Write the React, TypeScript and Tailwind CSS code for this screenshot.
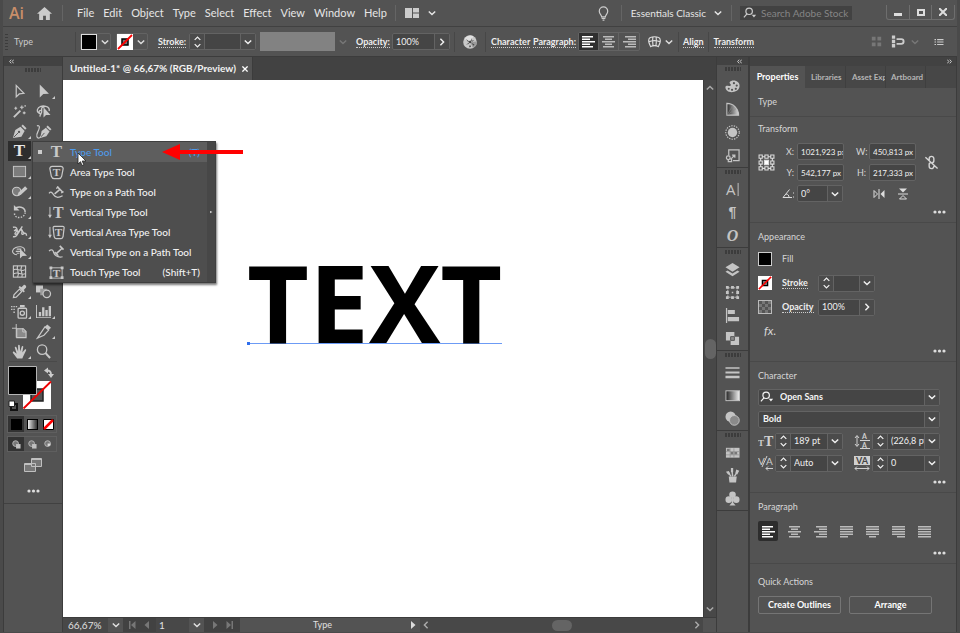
import { useState } from 'react'
import type { ReactNode } from 'react'
import clsx from 'clsx'

// All glyphs live on a 16x16 grid
const icons: Record<string, ReactNode> = {
  select: <path d="M4.5 1.5v12.2l3.2-3.1 5-.6z" fill="none" stroke="currentColor" strokeWidth="1.3" />,
  direct: <path d="M4 .5v14l3.8-3.8 6-.3z" />,
  wand: (
    <g stroke="currentColor" strokeWidth="1.2" fill="none">
      <path d="M2 14l7-7" strokeWidth="2" />
      <path d="M10.5 1.5v4M8.5 3.5h4M4 3v3M2.5 4.5h3M13 8v3M11.5 9.5h3M14 1v2" />
    </g>
  ),
  lasso: (
    <g>
      <path d="M6 10.5C2 10.5 1 8 1.5 6 2.5 2.5 7 1.5 10.5 2.5c3 .8 4 3 3.5 5M6 7c-2-.5-3.5 1-2.5 2.5s2.5.5 2.5-1V5c0-1.5 1.5-2 3-1.5M4 10c1 1 1 2 0 3.5" fill="none" stroke="currentColor" strokeWidth="1.4" />
      <path d="M8 3.5v11l2.7-2.7 4.800-.2z" />
    </g>
  ),
  pen: (
    <g>
      <path d="M1 15l2.5-8.5L9 3l4.5 4.5-3.5 6z" />
      <path d="M10 2.2L11.5.5 15.5 4.5 14 6z" />
      <path d="M2 14l5-5" stroke="#535353" strokeWidth="1" />
      <circle cx="7.5" cy="8.5" r="1.2" fill="#535353" />
    </g>
  ),
  curvature: (
    <g>
      <path d="M4.5 15L6 7.5l4.5-3.5 4 4-3.5 5z" />
      <path d="M11 3.2L12.5 1.5 16.5 5.5 15 7z" />
      <path d="M5 14l4-4.5" stroke="#535353" />
      <path d="M1 2c3-1 3 1.5 2 4S0 11 1 13.5s4 1.5 4-.5" fill="none" stroke="currentColor" strokeWidth="1.3" />
    </g>
  ),
  rect: <rect x="1.5" y="2.5" width="13" height="11" fill="#7c7c7c" stroke="currentColor" />,
  shaper: (
    <g>
      <circle cx="5" cy="8" r="4.5" fill="#7c7c7c" stroke="currentColor" strokeWidth="1.2" />
      <path d="M5.5 13l1.5-4L14 2.5 16.5 5 9.5 11.5z" />
    </g>
  ),
  rotate: (
    <g fill="none" stroke="currentColor" strokeWidth="1.6">
      <path d="M3 5.5C6 1.5 14 3 14 8.5" />
      <path d="M14 9c0 3-3 5.5-6.5 5.5S3 12 2.5 10" strokeDasharray="1.5 1.5" />
      <path d="M2 1v6h6z" fill="currentColor" stroke="none" />
    </g>
  ),
  warp: (
    <g fill="none" stroke="currentColor" strokeWidth="1.5">
      <path d="M1 3.5c4-1 5 2 4 4s-3 3-1 3.5 3-4 5-5 2 2 1.500 3.500 1 2 2 1 3-1 3 2" />
      <path d="M2 7h4M1 13.5c2 .5 4-.5 5-3L11 2.5" />
      <path d="M3.5 5.5l4 3.5M9 5l4 5" />
    </g>
  ),
  shapeBuilder: (
    <g>
      <path d="M5.5 11.5C2 11.5.5 9 .5 7.5 1.5 4 6 2.5 9.5 3c3 .5 4.5 2.5 4 5M5 5.5h5M4 7.8h5M5 9.8h3" fill="none" stroke="currentColor" strokeWidth="1.2" />
      <path d="M8.5 5v10.5l2.7-2.7 4.800-.2z" />
    </g>
  ),
  mesh: (
    <g fill="none" stroke="currentColor" strokeWidth="1.2">
      <rect x="1.5" y="2" width="13" height="12" />
      <path d="M2 6c4-2 7 3 12 0M2 10.5c5-3 7 2 12 0M6 2c-2 4 3 7 0 12M10.5 2c-3 5 2 8 0 12" />
    </g>
  ),
  eyedropper: (
    <g>
      <path d="M1.5 14.5l.6-3L8 5.5l2.5 2.5L4.5 14z" fill="none" stroke="currentColor" strokeWidth="1.3" />
      <path d="M7 3.5l5.5 5.5 1.2-1.2-1.2-1.5 2.5-2.6c1-1-1.5-3.7-2.7-2.5L10 3.5 8.3 2.2z" />
    </g>
  ),
  blend: (
    <g>
      <path d="M0 1.5h7.5V9H0z" />
      <path d="M4.5 5h7v7h-7z" fill="#9a9a9a" />
      <circle cx="11.5" cy="10.5" r="4" fill="#5b5b5b" stroke="currentColor" strokeWidth="1.3" />
    </g>
  ),
  symbol: (
    <g>
      <path d="M-1 2H.5v1.5H-1zM1.5 2H3v1.5H1.5zM4 2h1.5v1.5H4zM-1 5H.5v1.5H-1zM1.5 5H3v1.5H1.5zM1.5 8H3v1.5H1.5zM8.5 1h5v2.5h-5z" />
      <rect x="6.5" y="4.5" width="9" height="10.5" rx="1" fill="none" stroke="currentColor" strokeWidth="1.4" />
      <circle cx="11" cy="9.8" r="2.2" fill="none" stroke="currentColor" strokeWidth="1.4" />
    </g>
  ),
  graph: <path d="M0 1h1v13h15v1H0zM3 8.5h2.5V13H3zM6.5 3.5H9V13H6.5zM10 6.5h2.5V13H10zM13.5 2H16v11h-2.5z" />,
  artboard: (
    <g>
      <path d="M0 4.5h5M4.5 0v14.5" stroke="currentColor" />
      <path d="M5 5h7l3 3v6.5H5z" fill="#8a8a8a" stroke="currentColor" strokeWidth="1.2" />
      <path d="M11.5 4.5v4H15" fill="none" stroke="currentColor" />
    </g>
  ),
  slice: (
    <g>
      <path d="M1.5 15L9.5 3l4 3.5-5 5.5z" fill="none" stroke="currentColor" strokeWidth="1.3" />
      <path d="M9.5 3L12 .5l4 3.5-2.5 2.5z" />
    </g>
  ),
  hand: (
    <path d="M5.5 15.5L1 9.5c-.6-1 .8-1.900 1.600-1.100L5 10.5 3 4c-.2-1.200 1.400-1.500 1.800-.4L6.5 8 6.5 1.7c0-1.200 1.700-1.200 1.800 0L8.7 8l1.600-5.2c.4-1.100 1.900-.7 1.700.5L11 9l2.500-3c.8-.8 2-.1 1.500.9L12 13l-1 2.500z" />
  ),
  zoom: (
    <g fill="none" stroke="currentColor">
      <circle cx="6.5" cy="6" r="5" strokeWidth="1.4" />
      <path d="M10 9.5l5 5.5" strokeWidth="2.2" />
    </g>
  ),
  areaType: (
    <g>
      <path d="M3.5 1.5h9c2 0 3 1.5 2.5 3L13.5 12c-.5 1.8-1 2.5-3 2.5h-5c-2 0-2.5-1-3-2.5L1 4.5c-.5-1.5.5-3 2.5-3z" fill="none" stroke="currentColor" strokeWidth="1.3" />
      <text x="8" y="12" textAnchor="middle" className="font-['Liberation_Serif'] text-[12px] font-bold">T</text>
    </g>
  ),
  pathType: (
    <g>
      <path d="M0 9c2-2.500 3.500-1 5 1.500s4 4 9.500 1" fill="none" stroke="currentColor" strokeWidth="1.3" />
      <path d="M9 2l5.500 5.500M6 9.5l6-5" fill="none" stroke="currentColor" strokeWidth="1.700" />
      <path d="M8 4l1.500-2.500M13 8.500l2.500-1.500" fill="none" stroke="currentColor" strokeWidth="1.400" />
    </g>
  ),
  vertType: (
    <g>
      <path d="M1 2v10" stroke="currentColor" />
      <path d="M-1 10.5h4l-2 3.5z" />
      <text x="10" y="13.5" textAnchor="middle" className="font-['Liberation_Serif'] text-[17px] font-bold">T</text>
    </g>
  ),
  vertArea: (
    <g>
      <path d="M1 2v10" stroke="currentColor" />
      <path d="M-1 10.5h4l-2 3.5z" />
      <path d="M6 1.5h8.5c1.5 0 2 1 1.5 2.5l-1 8.5c-.3 1.5-.8 2-2 2H7.500c-1.300 0-1.700-.5-2-2L4.500 4C4.200 2.500 4.500 1.500 6 1.500z" fill="none" stroke="currentColor" strokeWidth="1.3" />
      <text x="10.2" y="12" textAnchor="middle" className="font-['Liberation_Serif'] text-[12px] font-bold">T</text>
    </g>
  ),
  vertPath: (
    <g>
      <path d="M0 6.500c3-3 4.500-.5 5 1.500s3.500 6 9.500 4.500" fill="none" stroke="currentColor" strokeWidth="1.3" />
      <path d="M14 3.500l-6.500 6M11.500 1l4 4" fill="none" stroke="currentColor" strokeWidth="1.700" />
      <path d="M6 7.500l4 4" fill="none" stroke="currentColor" strokeWidth="1.400" />
    </g>
  ),
  touchType: (
    <g>
      <path d="M2 3h12v11H2z" fill="none" stroke="currentColor" />
      <path d="M.5 1.5h3v3h-3zM12.5 1.5h3v3h-3zM.5 12h3v3h-3zM12.5 12h3v3h-3z" />
      <text x="8" y="12.5" textAnchor="middle" className="font-['Liberation_Serif'] text-[12px] font-bold">T</text>
    </g>
  ),
  palette: (
    <g>
      <path d="M9 1.5c4 0 7 2.5 6.5 6.5S11 14 7 14 1 11.5.5 9.5 2 7 4 7.5 7 6 5.5 5 5.5 1.5 9 1.5z" />
      <g fill="#535353">
        <circle cx="9.5" cy="4.5" r="1.2" />
        <circle cx="12.5" cy="7" r="1.2" />
        <circle cx="11.5" cy="10.5" r="1.2" />
        <circle cx="7.5" cy="11.5" r="1.2" />
        <circle cx="4" cy="10.3" r="1.1" />
      </g>
    </g>
  ),
  guide: (
    <g>
      <linearGradient id="guide"><stop stopColor="#2b2b2b" /><stop offset="1" stopColor="#d8d8d8" /></linearGradient>
      <path d="M2 1.5c7 0 12.5 5.5 12.5 12.5H2z" fill="url(#guide)" stroke="currentColor" strokeWidth="1.2" />
      <path d="M2 14L12 7M2 14L8.5 3.5" stroke="#888" strokeWidth=".6" />
    </g>
  ),
  themes: (
    <g>
      <circle cx="8" cy="8" r="5" />
      <circle cx="8" cy="8" r="7.2" fill="none" stroke="currentColor" strokeWidth="1.2" strokeDasharray="1.5 1.2" />
    </g>
  ),
  exportAsset: (
    <g fill="none" stroke="currentColor" strokeWidth="1.3">
      <path d="M4 8V2h11v11.5H8.5" />
      <circle cx="3.5" cy="10.5" r="2" />
      <path d="M5 11.5h2v3H3.5v-2M7 11l3-3M7.5 7.5h3v3" />
    </g>
  ),
  character: (
    <g>
      <text x="6" y="13.5" textAnchor="middle" className="font-['Open_Sans'] text-[16px] font-medium">A</text>
      <path d="M14 1v14" stroke="currentColor" />
    </g>
  ),
  paragraph: <text x="8" y="13" textAnchor="middle" className="font-['Liberation_Sans'] text-[15px] font-bold">¶</text>,
  openType: <text x="8" y="13.5" textAnchor="middle" className="font-['Liberation_Serif'] text-[17px] font-bold italic">O</text>,
  layers: <path d="M8 1l7.5 4.7L8 10.5.5 5.7zM2.7 9L8 12.3 13.3 9l2.2 1.5L8 15.3.5 10.5z" />,
  artboards: (
    <g>
      <path d="M3 3h10v10H3z" fill="none" stroke="currentColor" strokeDasharray="2 1" />
      <path d="M1 1h3v3H1zM6.5 1h3v3h-3zM12 1h3v3h-3zM1 6.5h3v3H1zM12 6.5h3v3h-3zM1 12h3v3H1zM6.5 12h3v3h-3zM12 12h3v3h-3zM7.2 7.2h1.6v1.6H7.2z" />
    </g>
  ),
  align: <path d="M1 0h1.3v16H1zM3 2h7.5v4.5H3zM3 9.5h12V14H3z" />,
  pathfinder: (
    <g>
      <path d="M1 1h9v5h5v9H6v-5H1z" />
      <path d="M6 6h4v4H6z" fill="#8a8a8a" stroke="#535353" />
    </g>
  ),
  stroke: <path d="M.5 2.5h15V4H.5zM.5 7h15v2H.5zM.5 11.5h15V14H.5z" />,
  gradient: (
    <g>
      <linearGradient id="grad"><stop stopColor="#222" /><stop offset="1" stopColor="#f2f2f2" /></linearGradient>
      <rect x="1" y="3" width="14.5" height="10.5" fill="url(#grad)" stroke="currentColor" />
    </g>
  ),
  transparency: (
    <g>
      <circle cx="6" cy="6" r="5.5" />
      <circle cx="10" cy="10" r="5.2" fill="#8a8a8a" stroke="currentColor" />
    </g>
  ),
  swatches: (
    <g>
      <rect x="1" y="3" width="14.5" height="10.5" />
      <path d="M2 4h3v2.5H2zM6 7.5h3V10H6zM10 7.5h3V10h-3z" fill="#777" />
      <path d="M5.5 3.5v10M9.5 3.5v10M1 7h14M1 10.5h14" stroke="#8b8b8b" strokeWidth=".7" />
    </g>
  ),
  brushes: (
    <g>
      <path d="M4 9h8.5l-.7 6.5H4.7z" />
      <path d="M6.5 9L3.5 5M8.2 9L7.5 3M10 9l3.5-5.5" stroke="currentColor" strokeWidth="1.5" />
      <path d="M1 4l3-.8L5.7 6l-2.2 1.2zM6.3 0h2.4v4.5H6.3zM12 1.5l3.2 1.5-2.2 3.8-2-1.3z" />
    </g>
  ),
  club: (
    <g>
      <circle cx="8" cy="4" r="3.5" />
      <circle cx="4" cy="9.2" r="3.5" />
      <circle cx="12" cy="9.2" r="3.5" />
      <path d="M7.2 7h1.6v5.5l2.5 3H4.7l2.5-3z" />
    </g>
  ),
  home: <path d="M8 1L0 8.2h2.3V15H6.5v-4.5h3V15h4.2V8.2H16z" />,
  layout: <path d="M1 3h7v10H1zM9 3h6v4.5H9zM9 8.5h6V13H9z" />,
  bulb: (
    <g fill="none" stroke="currentColor" strokeWidth="1.3">
      <path d="M6 11.5C6 9.5 3.5 8.5 3.5 5.5a4.5 4.5 0 019 0c0 3-2.5 4-2.5 6z" />
      <path d="M6 13.2h4M7 15h2" />
    </g>
  ),
  search: (
    <g fill="none" stroke="currentColor" strokeWidth="1.4">
      <circle cx="7" cy="6" r="3.7" />
      <path d="M4.5 9L1 13" />
      <path d="M10 10h5l-2.5 3z" fill="currentColor" stroke="none" />
    </g>
  ),
  sphere: (
    <g>
      <circle cx="8" cy="8" r="6.8" />
      <path d="M2.5 5a6.8 6.8 0 019-2.800L8 8z" fill="#e0e0e0" />
      <path d="M8 8l6.8-.5A6.8 6.8 0 0111 14z" fill="#9a9a9a" />
      <g fill="#484848">
        <circle cx="8" cy="8" r="1.3" />
        <path d="M4 5l3 2.2-.8.8zM10 4l-.5 3.2-1-.3zM4 10.5l2.7-1.5.3 1zM8 10.5l1 2.5-2 .2zM9.5 9l3 1.5-1 1.2zM12.5 6l-2.5 1.7-.2-1z" />
      </g>
    </g>
  ),
  envelope: (
    <path d="M2 5.5C3 2 13 2 14 5.5c1 3-.5 5-2 8-2-1.5-6-1.5-8 0-1.5-3-3-5-2-8zM1.8 8.5c3-2 9.4-2 12.4 0M6.5 3c-1 3-.5 6 0 9.5M9.5 3c1 3 .5 6 0 9.5" fill="none" stroke="currentColor" strokeWidth="1.2" />
  ),
  snap: <path d="M3 3h4v4H3zM9 3h4v4H9zM3 9h4v4H3zM9 9h4v4H9z" />,
  arrange: (
    <g>
      <path d="M2 1.5h3.5V5H2zM2 6h3.5v3.5H2zM2 10.5h3.5v4H2z" />
      <path d="M7 5.5h5c1.5 0 2.5 1 2.5 2.5s-1 2.5-2.5 2.5H7" fill="none" stroke="currentColor" strokeWidth="2" />
    </g>
  ),
  list: <path d="M2 4h2v1.5H2zM5.5 4H14v1.5H5.5zM2 7.2h2v1.5H2zM5.5 7.2H14v1.5H5.5zM2 10.5h2V12H2zM5.5 10.5H14V12H5.5z" />,
  refPoint: (
    <g fill="none" stroke="currentColor">
      <path d="M1 1h3v3H1zM6.5 1h3v3h-3zM12 1h3v3h-3zM1 6.5h3v3H1zM12 6.5h3v3h-3zM1 12h3v3H1zM6.5 12h3v3h-3zM12 12h3v3h-3zM4 2.5h2.5M9.5 2.5H12M4 13.5h2.5M9.5 13.5H12M2.5 4v2.5M2.5 9.5V12M13.5 4v2.5M13.5 9.5V12" />
      <path d="M6 6h4v4H6z" fill="#fff" />
    </g>
  ),
  unlink: (
    <path d="M5.5 6V4a2.5 2.5 0 015 0v2c0 1.5-1 2-2 2M10.5 10v2a2.5 2.5 0 01-5 0v-2c0-1.500 1-2 2-2M1.5 2.5l13 12" fill="none" stroke="currentColor" strokeWidth="1.5" />
  ),
}

function Icon({ name, className = 'size-4' }: { name: string; className?: string }) {
  return (
    <svg viewBox="0 0 16 16" fill="currentColor" aria-hidden="true" className={clsx('shrink-0 overflow-visible', className)}>
      {icons[name]}
    </svg>
  )
}

const chevrons = {
  down: 'M1 3l4 4 4-4',
  up: 'M1 7l4-4 4 4',
  right: 'M3 1l4 4-4 4',
  left: 'M7 1L3 5l4 4',
}

function Chevron({ dir = 'down', className = 'size-2' }: { dir?: keyof typeof chevrons; className?: string }) {
  return (
    <svg viewBox="0 0 10 10" fill="none" stroke="currentColor" strokeWidth="1.8" aria-hidden="true" className={clsx('shrink-0', className)}>
      <path d={chevrons[dir]} />
    </svg>
  )
}

function Double({ flip = false }: { flip?: boolean }) {
  return (
    <svg viewBox="0 0 8 8" fill="none" stroke="#ddd" strokeWidth="1.4" className={clsx('size-[5px]', flip && 'rotate-180')}>
      <path d="M3.5 1L1 4l2.5 3M7.5 1L5 4l2.5 3" />
    </svg>
  )
}

function Grip() {
  return <div className="h-1 w-4 bg-[repeating-linear-gradient(90deg,#3c3c3c_0_2px,transparent_2px_3px)]" />
}

// Empty swatch with the red "none" slash
function NoneSwatch({ className }: { className: string }) {
  return (
    <svg viewBox="0 0 16 16" className={clsx('shrink-0', className)} aria-hidden="true">
      <path d="M0 0h16v16H0z" fill="#fff" />
      <path d="M5 5h6v6H5z" fill="#777" stroke="#000" strokeWidth="1.5" />
      <path d="M1 15L15 1" stroke="#f00" strokeWidth="1.8" />
    </svg>
  )
}

function Spinner() {
  return (
    <span className="flex w-[15px] shrink-0 flex-col items-center justify-center border-r border-[#636363] bg-[#4b4b4b]">
      <button aria-label="Increase" className="flex h-[7px] items-center"><Chevron dir="up" className="size-[7px]" /></button>
      <button aria-label="Decrease" className="flex h-[7px] items-center"><Chevron className="size-[7px]" /></button>
    </span>
  )
}

type FieldProps = {
  label: string
  value?: string
  spinner?: boolean
  arrow?: 'down' | 'right'
  className?: string
}

function Field({ label, value = '', spinner, arrow, className }: FieldProps) {
  return (
    <div className={clsx('flex h-[17px] shrink-0 overflow-hidden rounded-[2px] border border-[#636363] bg-[#454545] text-[#f0f0f0]', className)}>
      {spinner && <Spinner />}
      <input aria-label={label} defaultValue={value} className="min-w-0 flex-1 bg-transparent pl-[3px] outline-none" />
      {arrow && (
        <button aria-label={`${label} options`} className="flex w-[15px] shrink-0 items-center justify-center border-l border-[#636363] bg-[#4b4b4b]">
          <Chevron dir={arrow} />
        </button>
      )}
    </div>
  )
}

function Divider() {
  return <div className="h-5 w-px shrink-0 bg-[#474747]" />
}

function PanelLink({ children }: { children: ReactNode }) {
  return <a href="#" className="shrink-0 border-b border-dotted border-[#ccc] leading-[11px] font-bold text-[#eee]">{children}</a>
}

// Each row is [x, width] of one line of the glyph
const alignments = [
  { name: 'Align left', rows: [[0, 11], [0, 8], [0, 13], [0, 8], [0, 11]] },
  { name: 'Align center', rows: [[1, 11], [3, 7], [0, 13], [3, 7], [1, 11]] },
  { name: 'Align right', rows: [[2, 11], [5, 8], [0, 13], [5, 8], [2, 11]] },
  { name: 'Justify last left', rows: [[0, 13], [0, 13], [0, 13], [0, 13], [0, 8]] },
  { name: 'Justify last centered', rows: [[0, 13], [0, 13], [0, 13], [0, 13], [3, 7]] },
  { name: 'Justify last right', rows: [[0, 13], [0, 13], [0, 13], [0, 13], [5, 8]] },
  { name: 'Justify all', rows: [[0, 13], [0, 13], [0, 13], [0, 13], [0, 13]] },
]

function AlignIcon({ rows }: { rows: number[][] }) {
  return (
    <svg viewBox="0 0 13 13" fill="currentColor" className="size-[13px]" aria-hidden="true">
      {rows.map(([x, w], i) => (
        <rect key={i} x={x} y={i * 2.5 + 1} width={w} height="1.5" />
      ))}
    </svg>
  )
}

const menus = ['File', 'Edit', 'Object', 'Type', 'Select', 'Effect', 'View', 'Window', 'Help']

function MenuBar() {
  return (
    <header className="flex h-[27px] items-center border-b border-[#414141] text-[11px] text-[#e6e6e6]">
      <span className="w-[28px] pl-[6px] font-['Open_Sans'] text-[16px] font-semibold text-[#c98e69]">Ai</span>
      <button aria-label="Home" className="ml-[6px]"><Icon name="home" className="size-[15px] text-[#ccc]" /></button>
      <div className="ml-[10px] h-4 w-px bg-[#656565]" />
      <nav className="ml-[14px] flex gap-[9px]">
        {menus.map((m) => <button key={m}>{m}</button>)}
      </nav>
      <div className="ml-2 h-4 w-px bg-[#656565]" />
      <button aria-label="Arrange documents" className="ml-2 flex items-center gap-2">
        <Icon name="layout" className="size-4 text-[#ccc]" />
        <Chevron />
      </button>
      <div className="ml-auto flex items-center">
        <button aria-label="Learn" className="mr-[10px]"><Icon name="bulb" className="size-[15px] text-[#ccc]" /></button>
        <div className="h-4 w-px bg-[#656565]" />
        <button className="mx-[9px] flex items-center gap-2 text-[10px]">Essentials Classic <Chevron /></button>
        <div className="h-4 w-px bg-[#656565]" />
        <label className="ml-2 flex h-[14px] w-[112px] items-center gap-1 bg-[#424242] pl-[3px] text-[#ccc]">
          <Icon name="search" className="size-[14px]" />
          <input aria-label="Search" placeholder="Search Adobe Stock" className="w-full min-w-0 bg-transparent text-[10px] outline-none placeholder:text-[#858585]" />
        </label>
        <div className="mr-[2px] ml-[34px] flex h-[15px] self-start rounded-b-[3px] border border-t-0 border-[#6e6e6e]">
          <button aria-label="Minimize" className="flex w-[23px] items-center justify-center border-r border-[#6e6e6e]"><span className="mt-1 h-[3px] w-2 bg-[#ddd]" /></button>
          <button aria-label="Maximize" className="flex w-[22px] items-center justify-center border-r border-[#6e6e6e]"><span className="h-[7px] w-2 border-2 border-[#ddd]" /></button>
          <button aria-label="Close" className="flex w-[22px] items-center justify-center">
            <svg viewBox="0 0 8 8" className="size-2" stroke="#ddd" strokeWidth="2"><path d="M0 0l8 8M8 0L0 8" /></svg>
          </button>
        </div>
      </div>
    </header>
  )
}

function ControlBar() {
  return (
    <div className="flex h-[30px] items-center border-b border-[#3c3c3c] text-[9px] text-[#ddd]">
      <div className="ml-[2px] h-4 w-[3px] bg-[repeating-linear-gradient(#3c3c3c_0_1px,transparent_1px_3px)]" />
      <span className="ml-[6px] w-[61px] text-[#ccc]">Type</span>
      <Divider />
      <button aria-label="Fill color" className="ml-1 flex h-[17px] w-[31px] items-center gap-1 rounded-[2px] border border-[#636363]">
        <span className="size-4 border border-[#ddd] bg-black" />
        <Chevron />
      </button>
      <button aria-label="Stroke color" className="mr-[10px] ml-[5px] flex h-[17px] w-[32px] items-center gap-1 rounded-[2px] border border-[#636363]">
        <NoneSwatch className="size-4" />
        <Chevron />
      </button>
      <div className="w-[31px] shrink-0"><PanelLink>Stroke:</PanelLink></div>
      <Field label="Stroke weight" spinner arrow="down" className="w-[67px]" />
      <div className="ml-1 h-[19px] w-[75px] shrink-0 bg-[#828282]" />
      <div className="flex h-[17px] w-4 items-center justify-center text-[#777]"><Chevron /></div>
      <div className="ml-[5px] w-[36px] shrink-0"><PanelLink>Opacity:</PanelLink></div>
      <Field label="Opacity" value="100%" arrow="right" className="w-[58px]" />
      <div className="ml-1"><Divider /></div>
      <button aria-label="Recolor" className="mx-[7px]"><Icon name="sphere" className="size-4 text-[#c8c8c8]" /></button>
      <Divider />
      <div className="ml-[5px] w-[42px] shrink-0"><PanelLink>Character</PanelLink></div>
      <div className="w-[45px] shrink-0"><PanelLink>Paragraph:</PanelLink></div>
      <div className="flex rounded-[2px] border border-[#636363] text-[#bbb]">
        {alignments.slice(0, 3).map((a, i) => (
          <button key={a.name} aria-label={a.name} className={clsx('flex h-[17px] w-5 items-center justify-center border-r border-[#636363] last:border-0', i === 0 && 'bg-[#2f2f2f] text-white')}>
            <AlignIcon rows={a.rows} />
          </button>
        ))}
      </div>
      <button aria-label="Envelope" className="mr-[5px] ml-[7px] flex items-center gap-[3px]"><Icon name="envelope" className="size-[15px]" /><Chevron /></button>
      <Divider />
      <div className="mx-1"><PanelLink>Align</PanelLink></div>
      <Divider />
      <div className="ml-[5px]"><PanelLink>Transform</PanelLink></div>
      <div className="mr-3 ml-auto flex items-center gap-[6px]">
        <Icon name="snap" className="size-[15px] text-[#777]" />
        <Icon name="arrange" className="size-[15px] text-[#ccc]" />
        <span className="mr-2 text-[#777]"><Chevron /></span>
        <Icon name="list" className="size-3 text-[#ccc]" />
      </div>
    </div>
  )
}

const tools = [
  'select', 'direct', 'wand', 'lasso', 'pen', 'curvature', 'type', 'line', 'rect', 'brush', 'shaper', 'eraser', 'rotate', 'scale',
  'warp', 'free', 'shapeBuilder', 'perspective', 'mesh', 'gradientTool', 'eyedropper', 'blend', 'symbol', 'graph', 'artboard', 'slice', 'hand', 'zoom',
]
const plain = ['select', 'wand', 'lasso', 'curvature', 'mesh', 'blend', 'artboard', 'zoom']

function Toolbox() {
  return (
    <aside className="flex w-[60px] shrink-0 flex-col border-x border-[#3c3c3c] text-[#c8c8c8]">
      <div className="flex h-[9px] items-center bg-[#424242] pl-[5px]"><Double /></div>
      <div className="mx-auto mt-[2px]"><Grip /></div>
      <div className="mt-[9px] ml-1 grid grid-cols-[24px_24px]">
        {tools.map((t) => (
          <button key={t} aria-label={t} className={clsx('relative flex h-5 w-[23px] items-center justify-center', t === 'type' && 'bg-[#2d2d2d]')}>
            {t === 'type' ? <span className="font-['Liberation_Serif'] text-[17px] leading-5 font-bold text-[#e6e6e6]">T</span> : <Icon name={t} className="size-[15px]" />}
            {!plain.includes(t) && <span className="absolute right-0 bottom-[2px] size-[3px] bg-[#ccc] [clip-path:polygon(100%_0,100%_100%,0_100%)]" />}
          </button>
        ))}
      </div>
      <div className="mx-[5px] border-t border-[#494949]" />
      <svg viewBox="0 0 48 48" className="mt-1 ml-1 size-12" aria-label="Fill and stroke">
        <path d="M15 15h28v28H15z" fill="#fff" />
        <path d="M23 23h12v12H23z" fill="#535353" stroke="#222" strokeWidth="1.5" />
        <path d="M15.5 42.5L43 15.5" stroke="#e00" strokeWidth="1.8" />
        <path d="M.5.5h28v28H.5z" fill="#000" stroke="#b5b5b5" />
        <path d="M39 4.5c3 0 4 1 4 4" fill="none" stroke="#ccc" strokeWidth="1.8" />
        <path d="M40 1.5v6L36 4.5zM40 8h6l-3 4z" fill="#ccc" />
        <path d="M3 38h6v6H3z" fill="none" stroke="#111" strokeWidth="2" />
        <path d="M1 35h5.5v5.5H1z" fill="#fff" stroke="#222" />
      </svg>
      <div className="mt-[1px] ml-[3px] flex w-[50px] border border-[#5f5f5f]">
        <button aria-label="Color" className="flex h-4 w-4 items-center justify-center bg-[#333]"><span className="size-[11px] bg-black" /></button>
        <button aria-label="Gradient" className="flex h-4 w-4 items-center justify-center"><span className="size-[11px] border border-black bg-gradient-to-r from-[#eee] to-[#333]" /></button>
        <button aria-label="None" className="flex h-4 w-4 items-center justify-center">
          <svg viewBox="0 0 11 11" className="size-[11px]"><path d="M.5.5h10v10H.5z" fill="#fff" stroke="#000" /><path d="M1 10L10 1" stroke="#f00" strokeWidth="2.5" /></svg>
        </button>
      </div>
      <div className="mt-[3px] ml-[3px] flex w-[50px] border border-[#5f5f5f]">
        {['Draw normal', 'Draw behind', 'Draw inside'].map((m, i) => (
          <button key={m} aria-label={m} className={clsx('flex h-[14px] w-4 items-center justify-center', i === 0 && 'bg-[#333]')}>
            <svg viewBox="0 0 10 10" className="size-[9px]">
              <circle cx="4" cy="4" r="3.2" fill="#777" stroke="#bbb" />
              {i < 2 ? <path d="M4.5 4.5h5v5h-5z" fill="#c0c0c0" /> : <path d="M4 4h3v2L4 7z" fill="#ddd" />}
            </svg>
          </button>
        ))}
      </div>
      <button aria-label="Screen mode" className="mx-auto mt-[6px]">
        <svg viewBox="0 0 18 14" className="h-[14px] w-[18px]" stroke="#c0c0c0" fill="#777">
          <path d="M.5 5.5h11v8H.5zM7.5.5h10v8h-10z" />
          <path d="M7.5 1.5h10M.5 6.5h7" />
        </svg>
      </button>
      <button aria-label="Edit toolbar" className="mx-auto mt-[17px]"><Dots /></button>
      <div className="mt-[10px] flex-1 border-t border-[#414141]" />
    </aside>
  )
}

function Dots() {
  return (
    <svg viewBox="0 0 13 4" fill="#ddd" className="h-1 w-[13px]" aria-hidden="true">
      <circle cx="2" cy="2" r="1.6" />
      <circle cx="6.5" cy="2" r="1.6" />
      <circle cx="11" cy="2" r="1.6" />
    </svg>
  )
}

const typeTools = [
  { icon: 'type', label: 'Type Tool', keys: '(T)' },
  { icon: 'areaType', label: 'Area Type Tool' },
  { icon: 'pathType', label: 'Type on a Path Tool' },
  { icon: 'vertType', label: 'Vertical Type Tool' },
  { icon: 'vertArea', label: 'Vertical Area Type Tool' },
  { icon: 'vertPath', label: 'Vertical Type on a Path Tool' },
  { icon: 'touchType', label: 'Touch Type Tool', keys: '(Shift+T)' },
]

function TypeFlyout() {
  const [current, setCurrent] = useState('Type Tool')

  return (
    <div className="absolute top-[141px] left-[29px] flex w-[184px] border border-[#3f3f3f] bg-[#4e4e4e] text-[10px] font-medium text-[#f2f2f2] shadow-[1px_2px_2px_#0008]">
      <div className="flex-1">
        {typeTools.map((t) => (
          <button
            key={t.label}
            onClick={() => setCurrent(t.label)}
            className={clsx('flex h-5 w-full items-center pr-[7px]', current === t.label && 'bg-[#5e5e5e] text-[#4f9bea]')}
          >
            <span className="w-4 pl-[5px]">{current === t.label && <span className="block size-1 bg-[#ccc]" />}</span>
            <span className="mr-[6px] flex w-[15px] justify-center text-[#c8c8c8]">
              {t.icon === 'type' ? <span className="font-['Liberation_Serif'] text-[17px] leading-5 font-bold">T</span> : <Icon name={t.icon} className="size-[15px]" />}
            </span>
            <span className="whitespace-nowrap">{t.label}</span>
            <span className="ml-auto">{t.keys}</span>
          </button>
        ))}
      </div>
      <div className="flex w-2 items-center justify-center bg-[#474747]">
        <span className="size-[3px] bg-[#ccc] [clip-path:polygon(0_0,100%_50%,0_100%)]" />
      </div>
      <svg viewBox="0 0 82 18" className="absolute top-0 left-[129px] h-[18px] w-[82px]" aria-hidden="true">
        <path d="M0 10L18 2v6h63v4H18v6z" fill="#f00" />
      </svg>
      <svg viewBox="0 0 10 15" className="absolute top-[10px] left-[44px] h-[15px] w-[10px]" aria-hidden="true">
        <path d="M1 1v11l2.5-2.3L5 13.5l1.8-.8L5.2 9H9z" fill="#fff" stroke="#222" strokeWidth=".8" />
      </svg>
    </div>
  )
}

function Canvas() {
  return (
    <main className="flex min-w-0 flex-1 flex-col bg-[#424242]">
      <div className="flex h-[23px] text-[10px] font-bold text-[#f2f2f2]">
        <div className="flex w-[190px] items-center justify-between border-r border-[#3c3c3c] bg-[#535353] pr-1 pl-[7px] whitespace-nowrap">
          Untitled-1* @ 66,67% (RGB/Preview)
          <button aria-label="Close tab">
            <svg viewBox="0 0 7 7" className="size-[6px]" stroke="#fff" strokeWidth="1.5"><path d="M.5.5l6 6M6.5.5l-6 6" /></svg>
          </button>
        </div>
      </div>
      <div className="flex flex-1">
        <div className="relative flex-1 bg-white">
          <div className="absolute top-[168px] left-[184px] h-[96px] border-b border-[#6c9bf5] font-['Open_Sans'] text-[107px] leading-none font-bold text-black">
            TEXT
            <span className="absolute -bottom-[2px] left-0 size-[3px] bg-[#2f6fed]" />
          </div>
        </div>
        <div className="flex w-[13px] flex-col items-center border-l border-[#3c3c3c] bg-[#484848] py-1 text-[#aaa]">
          <Chevron dir="up" />
          <div className="flex-1" />
          <div className="h-5 w-[11px] rounded-full bg-[#646464]" />
          <div className="flex-1" />
          <Chevron />
        </div>
      </div>
      <div className="flex h-[15px] items-center border-t border-[#3c3c3c] text-[10px] text-[#e0e0e0]">
        <input aria-label="Zoom level" defaultValue="66,67%" className="w-[45px] bg-[#484848] pl-[5px] outline-none" />
        <button aria-label="Zoom options" className="flex h-full w-[15px] items-center justify-center bg-[#535353]"><Chevron /></button>
        <div className="flex w-[33px] justify-center gap-[7px] text-[#777]">
          <svg viewBox="0 0 8 8" className="size-2" fill="currentColor"><path d="M1 0h1.5v8H1zM7.5 0v8L3 4z" /></svg>
          <svg viewBox="0 0 8 8" className="size-2" fill="currentColor"><path d="M6 0v8L1.5 4z" /></svg>
        </div>
        <input aria-label="Artboard number" defaultValue="1" className="w-[33px] bg-[#484848] pl-[3px] outline-none" />
        <button aria-label="Artboard options" className="flex h-full w-[15px] items-center justify-center bg-[#535353]"><Chevron /></button>
        <div className="flex w-[36px] justify-center gap-[7px] text-[#777]">
          <svg viewBox="0 0 8 8" className="size-2" fill="currentColor"><path d="M2 0v8l4.5-4z" /></svg>
          <svg viewBox="0 0 8 8" className="size-2" fill="currentColor"><path d="M5.5 0H7v8H5.5zM.5 0v8L5 4z" /></svg>
        </div>
        <div className="flex h-full w-[165px] items-center justify-center bg-[#535353] text-[9px]">Type</div>
        <button aria-label="Status options" className="flex h-full w-[15px] items-center justify-center bg-[#535353]">
          <svg viewBox="0 0 8 8" className="size-2" fill="#ddd"><path d="M2 0v8l4.5-4z" /></svg>
        </button>
        <div className="flex h-full flex-1 items-center bg-[#484848] px-[2px] text-[#aaa]">
          <Chevron dir="left" />
          <div className="flex-1" />
          <div className="h-[11px] w-5 rounded-full bg-[#646464]" />
          <div className="flex-1" />
          <Chevron dir="right" />
        </div>
        <div className="h-full w-[13px] bg-[#535353]" />
      </div>
    </main>
  )
}

const dockGroups = [
  ['palette', 'guide', 'themes', 'exportAsset'],
  ['character', 'paragraph', 'openType'],
  ['layers', 'artboards', 'align', 'pathfinder'],
  ['stroke', 'gradient', 'transparency'],
  ['swatches', 'brushes', 'club'],
]

function Dock() {
  return (
    <aside className="flex w-[33px] shrink-0 flex-col border-x border-[#3c3c3c] text-[#c4c4c4]">
      <div className="flex h-2 items-center justify-end bg-[#424242] pr-[6px]"><Double /></div>
      {dockGroups.map((group) => (
        <div key={group[0]} className="flex flex-col items-center border-b border-[#3c3c3c] pt-[2px]">
          <div className="h-2"><Grip /></div>
          {group.map((name) => (
            <button key={name} aria-label={name} className="flex h-[23px] items-center"><Icon name={name} className="size-[15px]" /></button>
          ))}
        </div>
      ))}
    </aside>
  )
}

function MoreButton({ label }: { label: string }) {
  return (
    <div className="flex h-[15px] items-center justify-end pr-[10px]">
      <button aria-label={label}><Dots /></button>
    </div>
  )
}

function Labeled({ text, value }: { text: string; value: string }) {
  return (
    <div className="flex items-center gap-[3px]">
      <span className="w-[10px] text-right">{text}</span>
      <Field label={text} value={value} className="w-[47px] text-[8px]" />
    </div>
  )
}

function FontSelect({ label, value, search }: { label: string; value: string; search?: boolean }) {
  return (
    <div className="flex h-[22px] items-center">
      <div className="flex h-[17px] w-[182px] items-center rounded-[2px] border border-[#636363] bg-[#454545] text-[#f5f5f5]">
        {search && <Icon name="search" className="ml-[1px] size-[14px]" />}
        <select aria-label={label} className={clsx('min-w-0 flex-1 appearance-none bg-transparent font-bold outline-none', search ? 'pl-[6px]' : 'pl-1')}>
          <option>{value}</option>
        </select>
        <span className="flex h-full w-[15px] items-center justify-center border-l border-[#636363] bg-[#4b4b4b]"><Chevron /></span>
      </div>
    </div>
  )
}

function PropertiesPanel() {
  return (
    <aside className="flex w-[208px] shrink-0 flex-col border-x border-[#3c3c3c] text-[9px] text-[#d6d6d6]">
      <div className="flex h-[9px] items-center justify-end bg-[#424242] pr-[4px]"><Double flip /></div>
      <div role="tablist" className="flex h-[22px] bg-[#474747] text-[8px] font-bold text-[#b5b5b5]">
        <button role="tab" className="w-[55px] bg-[#535353] text-[9px] text-white">Properties</button>
        <button role="tab" className="w-[41px] overflow-hidden border-r border-[#3f3f3f] pl-[6px] text-left">Libraries</button>
        <button role="tab" className="w-[40px] overflow-hidden border-r border-[#3f3f3f] pl-[6px] text-left whitespace-nowrap">Asset Exp</button>
        <button role="tab" className="w-[40px] overflow-hidden border-r border-[#3f3f3f] pl-[5px] text-left">Artboard</button>
      </div>

      <section className="flex h-[29px] items-center border-b border-[#494949] pl-2">Type</section>

      <section className="border-b border-[#494949] pb-[3px] pl-2">
        <h2 className="flex h-6 items-center">Transform</h2>
        <div className="flex">
          <div className="flex h-[42px] w-[26px] items-center"><Icon name="refPoint" className="size-[17px] text-[#ddd]" /></div>
          <div className="grid grid-cols-[60px_60px] gap-x-3">
            <div className="flex h-[21px] items-center"><Labeled text="X:" value="1021,923 px" /></div>
            <div className="flex h-[21px] items-center"><Labeled text="W:" value="450,813 px" /></div>
            <div className="flex h-[21px] items-center"><Labeled text="Y:" value="542,177 px" /></div>
            <div className="flex h-[21px] items-center"><Labeled text="H:" value="217,333 px" /></div>
          </div>
          <button aria-label="Constrain proportions" className="ml-2"><Icon name="unlink" className="size-[15px]" /></button>
        </div>
        <div className="flex h-[21px] items-center">
          <svg viewBox="0 0 12 10" className="mr-[3px] ml-6 h-[10px] w-3" fill="none" stroke="#ddd"><path d="M7.5.5L1 8.5h9M4 5c2 0 3 1.5 3 3.5" /><path d="M11 4h1M11 8h1" /></svg>
          <Field label="Rotate" value="0°" arrow="down" className="w-[46px]" />
          <button aria-label="Flip horizontal" className="ml-[30px]">
            <svg viewBox="0 0 12 12" className="size-3" fill="#ddd"><path d="M6 1v10" stroke="#ddd" /><path d="M1 2.5v7L4.5 6z" fill="none" stroke="#ddd" /><path d="M11.5 2v8L7.5 6z" /></svg>
          </button>
          <button aria-label="Flip vertical" className="ml-3">
            <svg viewBox="0 0 12 12" className="size-3" fill="#ddd"><path d="M1 6h10" stroke="#ddd" /><path d="M2.5 11h7L6 7.5z" fill="none" stroke="#ddd" /><path d="M2 .5h8L6 4.5z" /></svg>
          </button>
        </div>
        <MoreButton label="Transform options" />
      </section>

      <section className="border-b border-[#494949] pt-1 pb-[3px] pl-2">
        <h2 className="flex h-5 items-center">Appearance</h2>
        <div className="flex h-6 items-center gap-[10px]">
          <span className="size-[14px] border border-[#ccc] bg-black" />Fill
        </div>
        <div className="flex h-6 items-center">
          <NoneSwatch className="mr-[10px] size-[14px]" />
          <div className="w-[36px]"><PanelLink>Stroke</PanelLink></div>
          <Field label="Stroke" spinner arrow="down" className="w-[57px]" />
        </div>
        <div className="flex h-6 items-center">
          <span className="mr-[10px] size-[14px] border border-[#bbb] bg-[repeating-conic-gradient(#777_0_25%,#555_0_50%)] bg-[length:6px_6px]" />
          <div className="w-[36px]"><PanelLink>Opacity</PanelLink></div>
          <Field label="Opacity" value="100%" arrow="right" className="w-[57px]" />
        </div>
        <button aria-label="Effects" className="flex h-6 items-center pl-[6px] text-[12px] italic">fx.</button>
        <MoreButton label="Appearance options" />
      </section>

      <section className="border-b border-[#494949] pt-1 pb-[3px] pl-2">
        <h2 className="flex h-5 items-center">Character</h2>
        <FontSelect label="Font family" value="Open Sans" search />
        <FontSelect label="Font style" value="Bold" />
        <div className="flex h-[22px] w-[182px] items-center">
          <svg viewBox="0 0 16 16" className="size-4 font-['Liberation_Serif'] font-bold" fill="#d0d0d0"><text x="0" y="13" className="text-[9px]">T</text><text x="6" y="13" className="text-[14px]">T</text></svg>
          <Field label="Font size" value="189 pt" spinner arrow="down" className="ml-px w-[68px]" />
          <svg viewBox="0 0 16 16" className="ml-auto size-4" fill="#d0d0d0"><path d="M3 3v10M1 5l2-2.5L5 5M1 11l2 2.5L5 11M6 7.5h10M6 15.5h10" fill="none" stroke="#d0d0d0" /><text x="8" y="6" className="text-[7px] font-bold">A</text><text x="8" y="15" className="text-[7px] font-bold">A</text></svg>
          <Field label="Leading" value="(226,8 pt)" spinner arrow="down" className="ml-[2px] w-[68px]" />
        </div>
        <div className="flex h-[22px] w-[182px] items-center">
          <svg viewBox="0 0 16 16" className="size-4 text-[10px]" fill="#d0d0d0"><text x="0" y="10">V</text><text x="8" y="10">A</text><path d="M4 12L9 1M15 13.5H8M10 11.5l-2 2 2 2" fill="none" stroke="#d0d0d0" /></svg>
          <Field label="Kerning" value="Auto" spinner arrow="down" className="ml-px w-[68px]" />
          <svg viewBox="0 0 16 16" className="ml-auto size-4 text-[9px] font-bold"><path d="M0 1h16v9H0z" fill="#d0d0d0" /><text x="2" y="9" fill="#444">VA</text><path d="M1 13.5h14M3 11.5l-2 2 2 2M13 11.5l2 2-2 2" fill="none" stroke="#d0d0d0" /></svg>
          <Field label="Tracking" value="0" spinner arrow="down" className="ml-[2px] w-[68px]" />
        </div>
        <MoreButton label="Character options" />
      </section>

      <section className="border-b border-[#494949] pt-1 pb-[3px] pl-2">
        <h2 className="flex h-5 items-center">Paragraph</h2>
        <div className="flex h-7 items-center gap-[6px] text-[#bbb]">
          {alignments.map((a, i) => (
            <button key={a.name} aria-label={a.name} className={clsx('flex size-5 items-center justify-center rounded-[2px]', i === 0 && 'bg-[#2d2d2d] text-white')}>
              <AlignIcon rows={a.rows} />
            </button>
          ))}
        </div>
        <MoreButton label="Paragraph options" />
      </section>

      <section className="pt-2 pl-2">
        <h2 className="flex h-5 items-center">Quick Actions</h2>
        <div className="mt-1 flex gap-2 font-bold text-white">
          <button className="h-[18px] w-[83px] rounded-[2px] border border-[#757575]">Create Outlines</button>
          <button className="h-[18px] w-[83px] rounded-[2px] border border-[#757575]">Arrange</button>
        </div>
      </section>
    </aside>
  )
}

export default function App() {
  return (
    <div className="relative flex min-h-screen flex-col border-x-3 border-b border-[#4a4a4a] bg-[#535353] font-['Lato','Noto_Sans',sans-serif]">
      <MenuBar />
      <ControlBar />
      <div className="flex flex-1">
        <Toolbox />
        <Canvas />
        <Dock />
        <PropertiesPanel />
      </div>
      <TypeFlyout />
    </div>
  )
}
